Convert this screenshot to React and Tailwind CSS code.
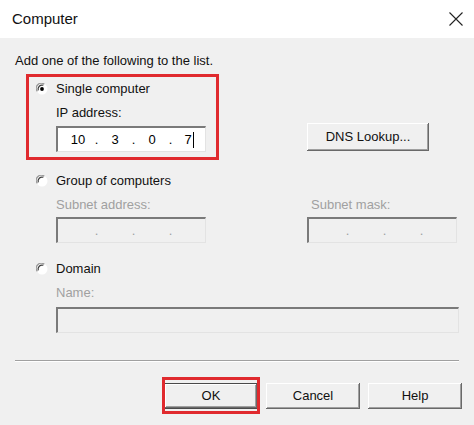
import React from "react";

const font = { fontFamily: '"Liberation Sans", Arial, sans-serif' };

function Radio({ checked }) {
  return (
    <svg width="12" height="12" viewBox="0 0 12 12" className="shrink-0">
      <circle cx="6" cy="6" r="5.5" fill="#ffffff" />
      <path d="M1.3 8.3 A5 5 0 0 1 8.3 1.3" fill="none" stroke="#9a9a9a" strokeWidth="1.3" />
      <path d="M2.3 7.4 A4 4 0 0 1 7.4 2.3" fill="none" stroke="#3c3c3c" strokeWidth="1.2" />
      {checked && <circle cx="6" cy="6" r="1.9" fill="#000000" />}
    </svg>
  );
}

function IpField({ values, enabled, cursor, className }) {
  const v = values || ["", "", "", ""];
  return (
    <div
      className={`flex h-[26px] items-center border-t-2 border-l-2 border-t-[#7a7a7a] border-l-[#7a7a7a] border-b border-r border-b-[#e3e3e3] border-r-[#e3e3e3] pl-[6px] ${
        enabled ? "bg-white text-black" : "bg-[#f0f0f0] text-[#a0a0a0]"
      } ${className || ""}`}
    >
      {v.map((o, i) => (
        <React.Fragment key={i}>
          <div className="flex w-[28px] items-center justify-center text-[13px] leading-[16px]">
            {o}
            {cursor && i === 3 && <span className="ml-[1px] inline-block h-[16px] w-[1px] bg-black" />}
          </div>
          {i < 3 && <div className="flex w-[9px] justify-center text-[13px] leading-[16px]">.</div>}
        </React.Fragment>
      ))}
    </div>
  );
}

function Btn({ children, className, def }) {
  return (
    <div
      className={`flex h-[26px] w-[94px] items-center justify-center bg-[#f0f0f0] text-[13px] text-[#111] ${
        def
          ? "border border-[#4a4a4a] shadow-[inset_-1px_-1px_#696969,inset_1px_1px_#fff,inset_-2px_-2px_#a0a0a0]"
          : "shadow-[inset_-1px_-1px_#696969,inset_1px_1px_#fff,inset_-2px_-2px_#a0a0a0]"
      } ${className || ""}`}
    >
      {children}
    </div>
  );
}

export default function App() {
  return (
    <div className="h-[425px] w-[474px] overflow-hidden bg-[#f0f0f0]" style={font}>
      {/* title bar */}
      <div className="flex h-[38px] items-center justify-between bg-white pl-[12px] pr-[11px]">
        <span className="text-[15px] text-[#111]">Computer</span>
        <svg width="14" height="14" viewBox="0 0 14 14">
          <path d="M0.5 0.5 L13.5 13.5 M13.5 0.5 L0.5 13.5" stroke="#222" strokeWidth="1.1" />
        </svg>
      </div>

      {/* body */}
      <div className="flex flex-col text-[13px] text-[#111]">
        <div className="mt-[15px] h-[16px] pl-[15px] leading-[16px]">Add one of the following to the list.</div>

        <div className="mt-[5px] flex pl-[26px]">
          <div className="flex h-[86px] w-[193px] flex-col border-[3px] border-[#e02a2e] pt-[6px]">
            <div className="flex h-[12px] items-center pl-[7px]">
              <Radio checked />
              <span className="ml-[8px] leading-[16px]">Single computer</span>
            </div>
            <div className="mt-[10px] h-[16px] pl-[27px] leading-[16px]">IP address:</div>
            <IpField enabled cursor values={["10", "3", "0", "7"]} className="ml-[27px] mt-[5px] w-[150px]" />
          </div>
          <Btn className="ml-[88px] mt-[49px] h-[28px] w-[122px]">DNS Lookup...</Btn>
        </div>

        <div className="mt-[15px] flex h-[12px] items-center pl-[36px]">
          <Radio />
          <span className="ml-[8px] leading-[16px]">Group of computers</span>
        </div>
        <div className="mt-[10px] flex h-[16px] leading-[16px] text-[#a0a0a0]">
          <span className="ml-[56px] w-[251px]">Subnet address:</span>
          <span className="ml-[4px]">Subnet mask:</span>
        </div>
        <div className="mt-[4px] flex">
          <IpField className="ml-[56px] w-[150px]" />
          <IpField className="ml-[101px] w-[150px]" />
        </div>

        <div className="mt-[20px] flex h-[12px] items-center pl-[36px]">
          <Radio />
          <span className="ml-[8px] leading-[16px]">Domain</span>
        </div>
        <div className="mt-[10px] h-[16px] pl-[56px] leading-[16px] text-[#a0a0a0]">Name:</div>
        <div className="ml-[56px] mt-[6px] h-[26px] w-[403px] border-t-2 border-l-2 border-t-[#7a7a7a] border-l-[#7a7a7a] border-b border-r border-b-[#e3e3e3] border-r-[#e3e3e3] bg-[#f0f0f0]" />

        <div className="ml-[15px] mt-[27px] h-[2px] w-[444px] border-t border-b border-t-[#a0a0a0] border-b-white" />

        <div className="mt-[21px] flex gap-[8px] pl-[164px]">
          <div className="relative">
            <Btn def>OK</Btn>
            <div className="pointer-events-none absolute -left-[2px] -right-[2px] -top-[6px] -bottom-[5px] border-[3px] border-[#e02a2e]" />
          </div>
          <Btn>Cancel</Btn>
          <Btn>Help</Btn>
        </div>
      </div>
    </div>
  );
}
